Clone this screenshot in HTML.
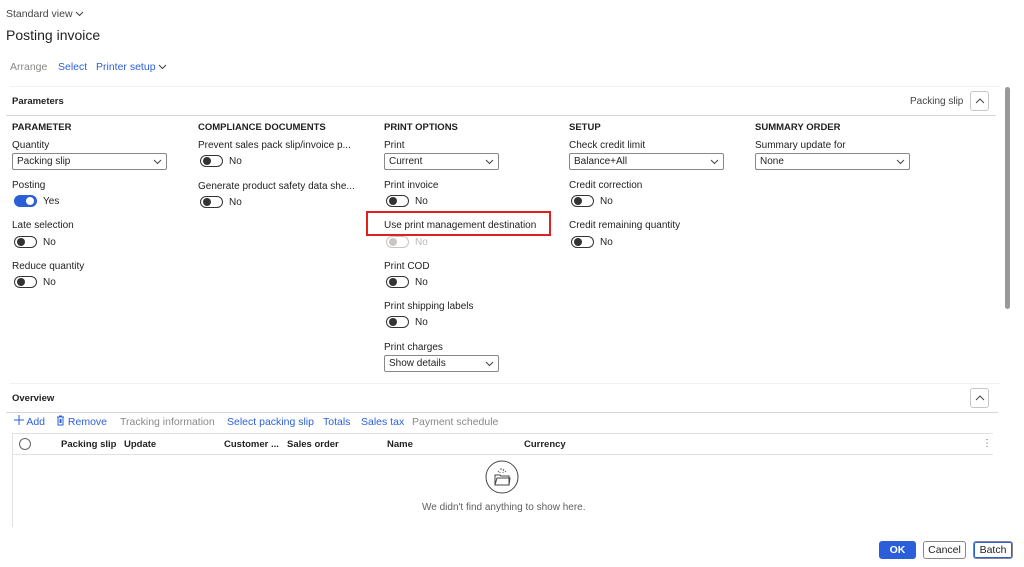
<!DOCTYPE html><html><head><style>
body{margin:0;width:1024px;height:567px;background:#fff;font-family:"Liberation Sans",sans-serif;font-size:10px;color:#201f1e;position:relative;overflow:hidden}
.a{position:absolute;white-space:nowrap;line-height:15px}
.h{font-weight:bold;font-size:9.5px}
.blue{color:#2b5fd9}.gray{color:#8a8886}
.dd{position:absolute;height:17px;border:1px solid #8a8886;border-radius:2px;box-sizing:border-box;padding-left:4px;line-height:15px;font-size:10px}
.dd svg{position:absolute;right:4px;top:5px}
.tg{position:absolute;width:23px;height:12px;border:1px solid #333;border-radius:7px;box-sizing:border-box}
.tg::after{content:"";position:absolute;left:2px;top:1px;width:8px;height:8px;border-radius:50%;background:#333}
.tg.on{background:#2b5fd9;border-color:#2b5fd9}.tg.on::after{left:auto;right:2px;background:#fff}
.tg.dis{border-color:#c8c6c4}.tg.dis::after{background:#c8c6c4}
.ln{position:absolute;height:1px;background:#d6d6d6}
.cb{position:absolute;width:18px;height:18px;border:1px solid #c8c6c4;border-radius:3px;box-sizing:border-box}
.cb svg{position:absolute;left:4px;top:6px}
.btn{position:absolute;height:18px;box-sizing:border-box;border:1px solid #8a8886;border-radius:3px;text-align:center;line-height:16px;font-size:10.5px}
</style></head><body>
<div class="a" style="left:6px;top:7px;color:#444;font-size:10.5px">Standard view <svg width="9" height="6" viewBox="0 0 9 6"><path d="M1 1l3.5 3.5L8 1" stroke="#444" fill="none"/></svg></div>
<div class="a" style="left:6px;top:27px;font-size:14px;line-height:17px">Posting invoice</div>
<div class="a gray" style="left:10px;top:60px;font-size:10.5px">Arrange</div>
<div class="a blue" style="left:58px;top:60px;font-size:10.5px">Select</div>
<div class="a blue" style="left:96px;top:60px;font-size:10.5px">Printer setup <svg width="9" height="6" viewBox="0 0 9 6"><path d="M1 1l3.5 3.5L8 1" stroke="#444" fill="none"/></svg></div>
<div class="ln" style="left:10px;top:86px;width:990px;background:#f0f0f0"></div>
<div class="a h" style="left:12px;top:94px">Parameters</div>
<div class="a" style="left:910px;top:94px;color:#444">Packing slip</div>
<div class="cb" style="left:970px;top:91px;width:19px;height:20px"><svg width="10" height="6" viewBox="0 0 10 6"><path d="M1 5l4-4 4 4" stroke="#444" fill="none"/></svg></div>
<div class="ln" style="left:6px;top:115px;width:990px"></div>
<div style="position:absolute;left:1005px;top:87px;width:5px;height:222px;background:#999;border-radius:3px"></div>

<div class="a h" style="left:12px;top:120px">PARAMETER</div>
<div class="a" style="left:12px;top:138px">Quantity</div>
<div class="dd" style="left:12px;top:153px;width:155px">Packing slip<svg width="9" height="6" viewBox="0 0 9 6"><path d="M1 1l3.5 3.5L8 1" stroke="#444" fill="none"/></svg></div>
<div class="a" style="left:12px;top:178px">Posting</div>
<div class="tg on" style="left:14px;top:195px"></div><div class="a" style="left:43px;top:194px">Yes</div>
<div class="a" style="left:12px;top:218px">Late selection</div>
<div class="tg" style="left:14px;top:236px"></div><div class="a" style="left:43px;top:235px">No</div>
<div class="a" style="left:12px;top:259px">Reduce quantity</div>
<div class="tg" style="left:14px;top:276px"></div><div class="a" style="left:43px;top:275px">No</div>

<div class="a h" style="left:198px;top:120px">COMPLIANCE DOCUMENTS</div>
<div class="a" style="left:198px;top:138px">Prevent sales pack slip/invoice p...</div>
<div class="tg" style="left:200px;top:155px"></div><div class="a" style="left:229px;top:154px">No</div>
<div class="a" style="left:198px;top:179px">Generate product safety data she...</div>
<div class="tg" style="left:200px;top:196px"></div><div class="a" style="left:229px;top:195px">No</div>

<div class="a h" style="left:384px;top:120px">PRINT OPTIONS</div>
<div class="a" style="left:384px;top:138px">Print</div>
<div class="dd" style="left:384px;top:153px;width:115px">Current<svg width="9" height="6" viewBox="0 0 9 6"><path d="M1 1l3.5 3.5L8 1" stroke="#444" fill="none"/></svg></div>
<div class="a" style="left:384px;top:178px">Print invoice</div>
<div class="tg" style="left:386px;top:195px"></div><div class="a" style="left:415px;top:194px">No</div>
<div style="position:absolute;left:366px;top:211px;width:185px;height:25px;border:2px solid #e02020;box-sizing:border-box"></div>
<div class="a" style="left:384px;top:218px">Use print management destination</div>
<div class="tg dis" style="left:386px;top:236px"></div><div class="a" style="left:415px;top:235px;color:#bbb">No</div>
<div class="a" style="left:384px;top:259px">Print COD</div>
<div class="tg" style="left:386px;top:276px"></div><div class="a" style="left:415px;top:275px">No</div>
<div class="a" style="left:384px;top:299px">Print shipping labels</div>
<div class="tg" style="left:386px;top:316px"></div><div class="a" style="left:415px;top:315px">No</div>
<div class="a" style="left:384px;top:340px">Print charges</div>
<div class="dd" style="left:384px;top:355px;width:115px">Show details<svg width="9" height="6" viewBox="0 0 9 6"><path d="M1 1l3.5 3.5L8 1" stroke="#444" fill="none"/></svg></div>

<div class="a h" style="left:569px;top:120px">SETUP</div>
<div class="a" style="left:569px;top:138px">Check credit limit</div>
<div class="dd" style="left:569px;top:153px;width:155px">Balance+All<svg width="9" height="6" viewBox="0 0 9 6"><path d="M1 1l3.5 3.5L8 1" stroke="#444" fill="none"/></svg></div>
<div class="a" style="left:569px;top:178px">Credit correction</div>
<div class="tg" style="left:571px;top:195px"></div><div class="a" style="left:600px;top:194px">No</div>
<div class="a" style="left:569px;top:218px">Credit remaining quantity</div>
<div class="tg" style="left:571px;top:236px"></div><div class="a" style="left:600px;top:235px">No</div>

<div class="a h" style="left:755px;top:120px">SUMMARY ORDER</div>
<div class="a" style="left:755px;top:138px">Summary update for</div>
<div class="dd" style="left:755px;top:153px;width:155px">None<svg width="9" height="6" viewBox="0 0 9 6"><path d="M1 1l3.5 3.5L8 1" stroke="#444" fill="none"/></svg></div>

<div class="ln" style="left:10px;top:383px;width:990px;background:#f0f0f0"></div>
<div class="a h" style="left:12px;top:391px">Overview</div>
<div class="cb" style="left:970px;top:388px;width:19px;height:20px"><svg width="10" height="6" viewBox="0 0 10 6"><path d="M1 5l4-4 4 4" stroke="#444" fill="none"/></svg></div>
<div class="ln" style="left:6px;top:412px;width:992px"></div>
<div class="a blue" style="left:14px;top:415px;font-size:10.5px"><svg width="10" height="10" viewBox="0 0 10 10"><path d="M5 0v10M0 5h10" stroke="#2b5fd9"/></svg> Add</div>
<div class="a blue" style="left:56px;top:415px;font-size:10.5px"><svg width="9" height="11" viewBox="0 0 9 11" style="vertical-align:-1px"><path d="M1 2h7M3 1h3M2 2v8h5V2M4 4v4M5 4v4" stroke="#2b5fd9" fill="none"/></svg> Remove</div>
<div class="a gray" style="left:120px;top:415px;font-size:10.5px">Tracking information</div>
<div class="a blue" style="left:227px;top:415px;font-size:10.5px">Select packing slip</div>
<div class="a blue" style="left:323px;top:415px;font-size:10.5px">Totals</div>
<div class="a blue" style="left:361px;top:415px;font-size:10.5px">Sales tax</div>
<div class="a gray" style="left:412px;top:415px;font-size:10.5px">Payment schedule</div>
<div class="ln" style="left:12px;top:433px;width:981px;background:#e1e1e1"></div>
<div class="ln" style="left:12px;top:454px;width:981px;background:#e1e1e1"></div>
<div style="position:absolute;left:12px;top:433px;width:1px;height:94px;background:#e1e1e1"></div>
<div style="position:absolute;left:19px;top:438px;width:10px;height:10px;border:1px solid #666;border-radius:50%"></div>
<div class="a" style="left:61px;top:437px;font-weight:bold;font-size:9.5px">Packing slip</div>
<div class="a" style="left:124px;top:437px;font-weight:bold;font-size:9.5px">Update</div>
<div class="a" style="left:224px;top:437px;font-weight:bold;font-size:9.5px">Customer ...</div>
<div class="a" style="left:287px;top:437px;font-weight:bold;font-size:9.5px">Sales order</div>
<div class="a" style="left:387px;top:437px;font-weight:bold;font-size:9.5px">Name</div>
<div class="a" style="left:524px;top:437px;font-weight:bold;font-size:9.5px">Currency</div>
<div class="a" style="left:982px;top:436px;color:#666">⋮</div>
<svg style="position:absolute;left:485px;top:460px" width="34" height="34" viewBox="0 0 34 34"><circle cx="17" cy="17" r="16" fill="none" stroke="#444"/><path d="M10 15h5l1 1h8v9H10z" fill="none" stroke="#444"/><path d="M10 25l2-7h13l-1 7" fill="none" stroke="#444"/><path d="M13 11l1 1M16 8v2M19 9l-1 2M21 11l-1 1M15 12v1M18 12v1" stroke="#666"/></svg>
<div class="a" style="left:422px;top:500px;color:#605e5c">We didn't find anything to show here.</div>

<div class="btn" style="left:879px;top:541px;width:37px;background:#2b5fd9;border-color:#2b5fd9;color:#fff;font-weight:bold">OK</div>
<div class="btn" style="left:923px;top:541px;width:43px">Cancel</div>
<div class="btn" style="left:973px;top:541px;width:40px;box-shadow:inset 0 0 0 1px #2b5fd9">Batch</div>
</body></html>
